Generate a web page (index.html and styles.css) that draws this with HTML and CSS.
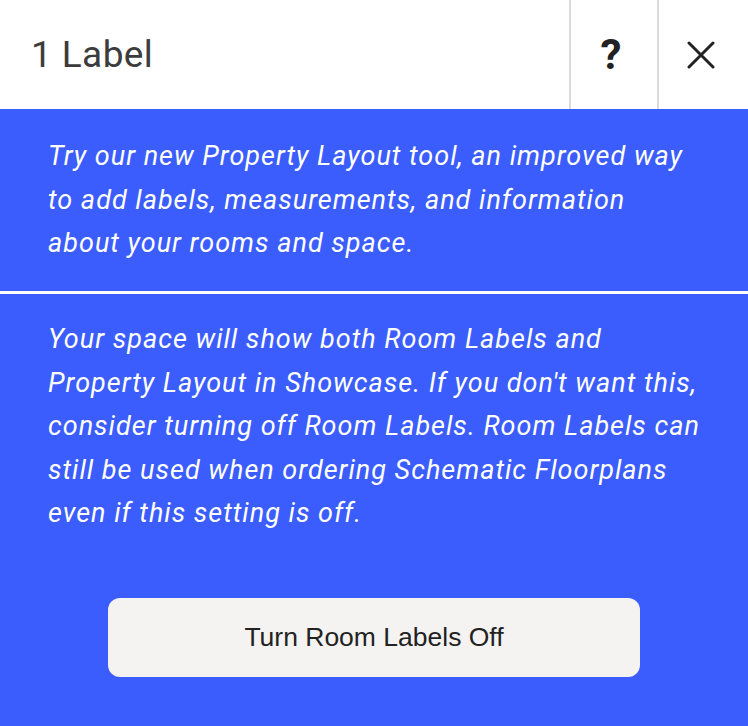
FILE: index.html
```html
<!DOCTYPE html>
<html lang="en">
<head>
<meta charset="utf-8">
<title>1 Label</title>
<link rel="stylesheet" href="styles.css">
</head>
<body>
<div class="panel">
  <header class="header">
    <h1 class="title">1 Label</h1>
    <button class="icon-btn help" type="button" aria-label="Help">?</button>
    <button class="icon-btn close" type="button" aria-label="Close">
      <svg width="28" height="28" viewBox="0 0 28 28" aria-hidden="true">
        <path d="M2 2 L26 26 M26 2 L2 26" stroke="#222" stroke-width="3" stroke-linecap="round" fill="none"/>
      </svg>
    </button>
  </header>
  <section class="notice notice-top">
    <p class="notice-text">Try our new Property Layout tool, an improved way to add labels, measurements, and information about your rooms and space.</p>
  </section>
  <section class="notice notice-bottom">
    <p class="notice-text">Your space will show both Room Labels and Property Layout in Showcase. If you don't want this, consider turning off Room Labels. Room Labels can still be used when ordering Schematic Floorplans even if this setting is off.</p>
    <div class="actions">
      <button class="action-btn" type="button">Turn Room Labels Off</button>
    </div>
  </section>
</div>
</body>
</html>
```
FILE: styles.css
```css
html, body {
  margin: 0;
  padding: 0;
}
body {
  width: 748px;
  height: 726px;
  overflow: hidden;
  background: #3b5dfe;
  font-family: Roboto, "Liberation Sans", sans-serif;
}
.panel {
  display: flex;
  flex-direction: column;
  height: 726px;
}
.header {
  display: flex;
  align-items: stretch;
  height: 109px;
  background: #ffffff;
}
.title {
  flex: 1;
  margin: 0;
  padding-left: 31px;
  display: flex;
  align-items: center;
  font-size: 37px;
  font-weight: 400;
  line-height: 1;
  letter-spacing: 0.4px;
  color: #3c3c3c;
}
.icon-btn {
  border: 0;
  border-left: 2px solid #dadada;
  background: #ffffff;
  margin: 0;
  padding: 0;
  display: flex;
  align-items: center;
  justify-content: center;
  color: #222222;
}
.help {
  width: 88px;
  font-family: Roboto, sans-serif;
  font-weight: 700;
  font-size: 42px;
  line-height: 1;
  padding-right: 6px;
}
.close {
  width: 91px;
  padding-right: 6px;
}
.notice {
  background: #3b5dfe;
  color: #ffffff;
  padding: 0 46px 0 48px;
}
.notice-top {
  padding-top: 26px;
  padding-bottom: 25.5px;
  border-bottom: 3px solid #ffffff;
}
.notice-bottom {
  flex: 1;
  padding-top: 24px;
}
.notice-text {
  margin: 0;
  font-style: italic;
  font-size: 27px;
  line-height: 43.5px;
  letter-spacing: 1px;
}
.actions {
  display: flex;
  justify-content: center;
  padding-top: 62px;
  margin-left: -48px;
  margin-right: -46px;
}
.action-btn {
  width: 532px;
  height: 79px;
  border: 0;
  border-radius: 12px;
  background: #f4f3f1;
  color: #222222;
  font-family: "Liberation Sans", Arial, sans-serif;
  font-size: 26.5px;
  margin: 0;
  padding: 0;
}
```
